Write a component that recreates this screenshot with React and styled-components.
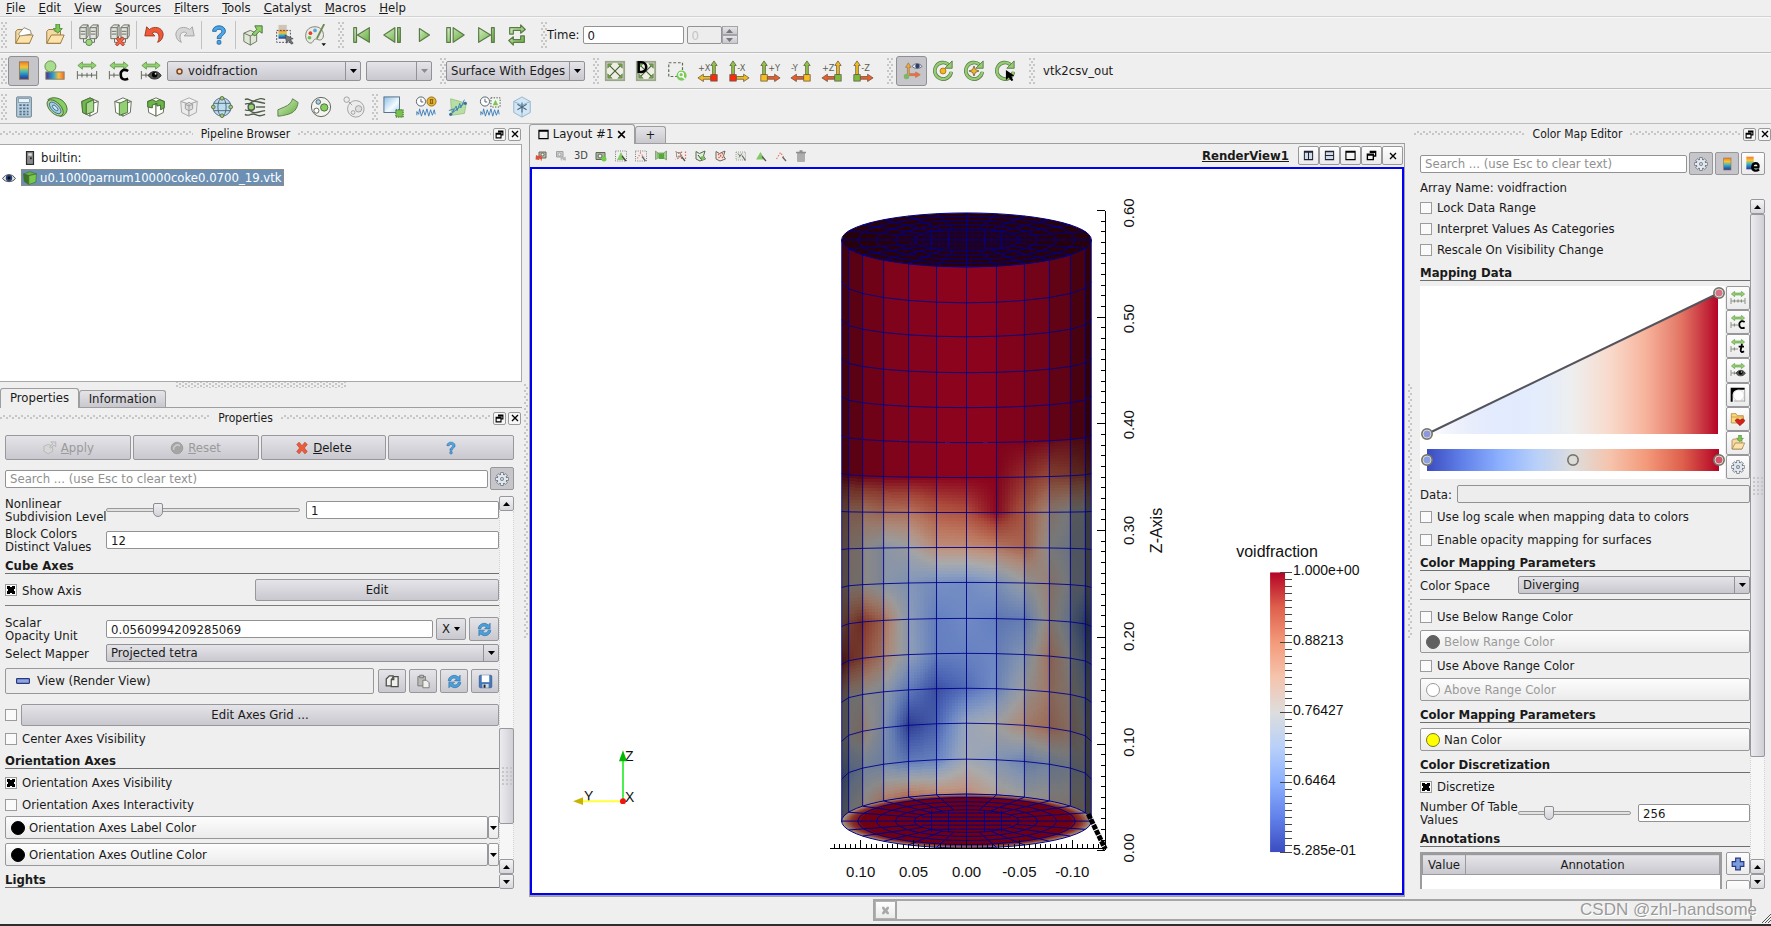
import React from 'react';
import styled, { createGlobalStyle } from 'styled-components';

const GlobalStyle = createGlobalStyle`
  * {
    box-sizing: border-box;
  }

  body {
    margin: 0;
    background: #efefef;
    color: #1a1a1a;
    font-family: 'DejaVu Sans Condensed', 'DejaVu Sans', sans-serif;
    font-size: 13px;
    line-height: 14px;
  }

  button, input, select {
    font: inherit;
    color: inherit;
    margin: 0;
  }
`;

const raised = 'linear-gradient(#e4e4e9, #c8c8ce)';
const pale = 'linear-gradient(#fdfdfd, #ebebeb)';
const dots = 'radial-gradient(circle at 1px 1px, #c6c6c6 1px, transparent 1px)';

const Page = styled.div`
  position: relative;
  display: flex;
  flex-direction: column;
  height: 100vh;
  min-height: 920px;
  overflow: hidden;
`;

const MenuBar = styled.nav`
  display: flex;
  align-items: flex-start;
  gap: 13px;
  height: 17px;
  padding: 0 6px;
  border-bottom: 1px solid #d2d2d2;
`;

const MenuItem = styled.button`
  height: 15px;
  border: 0;
  padding: 0;
  background: none;
  line-height: 15px;
`;

const ToolBar = styled.div`
  display: flex;
  align-items: center;
  height: ${props => props.$height || 36}px;
  padding-left: 1px;
  border-bottom: 1px solid #bdbdbd;
  border-top: 1px solid #f8f8f8;
`;

const Handle = styled.div`
  width: 6px;
  height: 26px;
  margin: 0 ${props => props.$right || 0}px 0 ${props => props.$left || 0}px;
  background: ${dots} 0 0 / 4px 6px, ${dots} 2px 3px / 4px 6px;
`;

const Separator = styled.div`
  width: 1px;
  height: 28px;
  margin: 0 1px;
  background: #c2c2c2;
`;

const ToolButton = styled.button`
  display: flex;
  align-items: center;
  justify-content: center;
  flex: none;
  width: ${props => props.$width || 31}px;
  height: 30px;
  padding: 0;
  border: 1px solid ${props => (props.$active ? '#8f8f93' : 'transparent')};
  border-radius: 3px;
  background: ${props => (props.$active ? '#c6c6ca' : 'none')};
`;

const TextBox = styled.input`
  flex: ${props => (props.$width ? 'none' : '1')};
  width: ${props => (props.$width ? props.$width + 'px' : 'auto')};
  min-width: 0;
  height: 18px;
  padding: 0 4px;
  border: 1px solid #929292;
  border-radius: 2px;
  background: ${props => (props.disabled ? '#ededed' : '#fff')};
  line-height: 14px;

  &::placeholder {
    color: #909090;
    opacity: 1;
  }
`;

const TimeLabel = styled.label`
  display: flex;
  align-items: center;
  gap: 3px;
`;

const Spinner = styled.div`
  display: flex;
  margin-left: 3px;
  color: #c4c4c4;
`;

const SpinnerArrows = styled.div`
  display: flex;
  flex-direction: column;
  width: 16px;
`;

const ArrowButton = styled.button`
  display: flex;
  align-items: center;
  justify-content: center;
  height: 9px;
  padding: 0;
  border: 1px solid #a4a4a8;
  background: ${raised};
`;

const SelectBox = styled.div`
  display: grid;
  align-items: center;
  flex: ${props => (props.$width ? 'none' : '1')};
  width: ${props => (props.$width ? props.$width + 'px' : 'auto')};
  height: ${props => props.$height || 18}px;
  margin-left: ${props => props.$left || 0}px;

  select {
    grid-area: 1 / 1;
    width: 100%;
    height: 100%;
    padding: 0 18px 0 ${props => props.$pad || 4}px;
    appearance: none;
    border: 1px solid #929296;
    border-radius: 2px;
    background: ${raised};
    opacity: 1;
  }
`;

const SelectArrow = styled.span`
  grid-area: 1 / 1;
  justify-self: end;
  display: flex;
  align-items: center;
  justify-content: center;
  width: 16px;
  height: 100%;
  border-left: 1px solid #929296;
  pointer-events: none;
`;

const SelectMark = styled.span`
  grid-area: 1 / 1;
  display: flex;
  width: 7px;
  margin-left: 9px;
  pointer-events: none;
`;

const MacroLink = styled.button`
  border: 0;
  padding: 0 0 0 8px;
  background: none;
`;

const Workspace = styled.main`
  display: flex;
  flex: 1;
  min-height: 0;
`;

const LeftDock = styled.section`
  display: flex;
  flex-direction: column;
  flex: none;
  width: 522px;
`;

const Splitter = styled.div`
  flex: none;
  display: flex;
  align-items: center;
  justify-content: center;
  width: ${props => props.$width}px;

  &::before {
    content: '';
    width: 4px;
    height: 254px;
    background: ${dots} 0 0 / 4px 6px, ${dots} 2px 3px / 4px 6px;
  }
`;

const SplitterRow = styled.div`
  flex: none;
  width: 170px;
  height: 6px;
  margin: 0 auto;
  background: ${dots} 0 3px / 6px 4px, ${dots} 3px 1px / 6px 4px;
`;

const TitleBar = styled.header`
  display: flex;
  align-items: center;
  gap: 2px;
  flex: none;
  height: 20px;
  padding-right: ${props => props.$right || 0}px;

  h2 {
    margin: 0 6px;
    font-size: 12px;
    font-weight: normal;
  }
`;

const Grip = styled.div`
  flex: 1;
  height: 6px;
  background: ${dots} 0 2px / 6px 6px, ${dots} 3px 0 / 6px 6px;
`;

const DockButton = styled.button`
  display: flex;
  align-items: center;
  justify-content: center;
  width: 13px;
  height: 13px;
  padding: 0;
  border: 1px solid #9a9a9a;
  border-radius: 2px;
  background: #f6f6f6;
`;

const Tree = styled.ul`
  flex: none;
  height: 238px;
  margin: 0;
  padding: 4px 0 0;
  border: 1px solid #a8a8a8;
  border-left: 0;
  background: #fff;
  list-style: none;
`;

const TreeItem = styled.li`
  display: flex;
  align-items: center;
  height: ${props => (props.$selected ? 17 : 18)}px;
  padding-left: ${props => (props.$selected ? 2 : 23)}px;
  gap: ${props => (props.$selected ? 5 : 4)}px;
  margin-bottom: 2px;
`;

const TreeLabel = styled.span`
  display: flex;
  align-items: center;
  gap: 3px;
  height: 17px;
  padding: 0 1px 0 1px;
  background: #6c90b4;
  border: 1px solid #8d8d86;
  color: #fff;
`;

const Tabs = styled.div`
  display: flex;
  align-items: flex-end;
  flex: none;
  height: 20px;
  border-bottom: 1px solid #9e9e9e;
`;

const Tab = styled.button`
  display: flex;
  align-items: center;
  justify-content: center;
  gap: 4px;
  width: ${props => props.$width}px;
  height: ${props => (props.$active ? 20 : 17)}px;
  margin-bottom: ${props => (props.$active ? -1 : 0)}px;
  padding: 0 0 1px;
  border: 1px solid #9e9e9e;
  border-bottom: 0;
  border-radius: 3px 3px 0 0;
  background: ${props => (props.$active ? '#efefef' : raised)};
`;

const ActionRow = styled.div`
  display: grid;
  grid-template-columns: repeat(4, 1fr);
  gap: 2px;
  padding: 7px 8px 0 5px;
`;

const PushButton = styled.button`
  display: flex;
  align-items: center;
  justify-content: center;
  gap: 4px;
  flex: ${props => (props.$width ? 'none' : '1')};
  width: ${props => (props.$width ? props.$width + 'px' : 'auto')};
  height: ${props => props.$height || 22}px;
  padding: 0;
  border: 1px solid #98989c;
  border-radius: 2px;
  background: ${props => (props.$active ? '#c6c6ca' : props.$pale ? pale : raised)};
  color: ${props => (props.disabled ? '#9a9a9a' : '#1a1a1a')};
`;

const SearchRow = styled.div`
  display: flex;
  align-items: center;
  gap: 2px;
  padding: ${props => props.$pad};
`;

const ScrollArea = styled.div`
  display: flex;
  flex: 1;
  min-height: 0;
  margin: ${props => props.$margin};
`;

const ScrollBody = styled.div`
  flex: 1;
  min-width: 0;
  overflow: hidden;
`;

const ScrollBar = styled.div`
  display: flex;
  flex-direction: column;
  flex: none;
  width: 15px;
  background: #f6f6f6;
`;

const ScrollStep = styled.button`
  display: flex;
  align-items: center;
  justify-content: center;
  height: 15px;
  padding: 0;
  border: 1px solid #98989c;
  border-radius: 2px;
  background: linear-gradient(#f4f4f6, #d8d8dc);
`;

const ScrollTrack = styled.div`
  display: flex;
  flex-direction: column;
  flex: 1;
  border: 1px dotted #d0d0d0;
  border-width: 0 1px;
  padding-top: ${props => props.$top}px;
`;

const ScrollThumb = styled.div`
  display: flex;
  align-items: center;
  justify-content: center;
  height: ${props => props.$height}px;
  margin: 0 -1px;
  border: 1px solid #98989c;
  border-radius: 2px;
  background: linear-gradient(90deg, #ececf0, #cfcfd5);

  &::before {
    content: '';
    width: 10px;
    height: 18px;
    background: ${dots} 0 0 / 4px 4px;
  }
`;

const Row = styled.div`
  display: flex;
  align-items: center;
  gap: ${props => props.$gap || 0}px;
  min-height: 14px;
  margin-top: ${props => props.$top}px;
`;

const RowLabel = styled.label`
  width: ${props => props.$width}px;
  flex: none;
  line-height: 13px;
  white-space: pre;
`;

const Heading = styled.h3`
  height: 17px;
  margin: ${props => props.$top}px 0 0;
  border-bottom: 1px solid #6f6f6f;
  font-size: 13px;
  line-height: 17px;
`;

const Rule = styled.hr`
  height: 1px;
  margin: ${props => props.$top}px 0 0;
  border: 0;
  background: #7c7c7c;
`;

const CheckLabel = styled.label`
  display: flex;
  align-items: center;
  gap: 5px;
`;

const CheckBox = styled.input`
  flex: none;
  width: 12px;
  height: 12px;
  appearance: none;
  border: 1px solid #9c9c9c;
  background: #fafafa;

  &:checked {
    background:
      linear-gradient(45deg, transparent 34%, #000 34%, #000 66%, transparent 66%) center / 8px 8px no-repeat,
      linear-gradient(-45deg, transparent 34%, #000 34%, #000 66%, transparent 66%) center / 8px 8px no-repeat,
      #fafafa;
  }
`;

const Slider = styled.input`
  flex: none;
  width: ${props => props.$width}px;
  height: 16px;
  margin-right: ${props => props.$right}px;
  appearance: none;
  background: none;

  &::-webkit-slider-runnable-track {
    height: 4px;
    border: 1px solid #9a9a9a;
    border-radius: 2px;
    background: #e2e2e2;
  }

  &::-webkit-slider-thumb {
    width: 10px;
    height: 14px;
    margin-top: -6px;
    appearance: none;
    border: 1px solid #8c8c90;
    border-radius: 2px 2px 5px 5px;
    background: linear-gradient(#f0f0f3, #d2d2d8);
  }
`;

const GroupButton = styled(PushButton)`
  justify-content: flex-start;
  gap: 7px;
  padding-left: 10px;
  margin-right: 1px;
  background: #ededed;
`;

const ColorButton = styled(PushButton)`
  justify-content: flex-start;
  padding-left: 5px;
  background: ${pale};
`;

const Swatch = styled.i`
  width: 14px;
  height: 14px;
  border: 1px solid ${props => props.$edge || '#333'};
  border-radius: 50%;
  background: ${props => props.$color};
`;

const Center = styled.section`
  display: flex;
  flex-direction: column;
  flex: 1;
  min-width: 0;
`;

const ViewFrame = styled.div`
  display: flex;
  flex-direction: column;
  flex: 1;
  min-height: 0;
  border: 1px solid #a0a0a0;
  border-top: 0;
  border-bottom-width: 2px;
`;

const ViewBar = styled.div`
  display: flex;
  align-items: center;
  flex: none;
  height: 23px;
  padding: 0 1px;
`;

const ViewTool = styled.button`
  display: flex;
  align-items: center;
  justify-content: center;
  width: 20px;
  height: 20px;
  padding: 0;
  border: 0;
  background: none;
  color: #444;
  font-size: 11px;
`;

const ViewName = styled.strong`
  margin: 0 9px 0 auto;
  font-size: 13px;
  text-decoration: underline;
`;

const ViewButton = styled.button`
  display: flex;
  align-items: center;
  justify-content: center;
  width: 21px;
  height: 19px;
  padding: 0;
  border: 1px solid #98989c;
  border-radius: 2px;
  background: ${pale};
`;

const Canvas = styled.div`
  flex: 1;
  min-height: 0;
  border: 2px solid #0000f4;
  background: #fff;

  svg {
    display: block;
    width: 100%;
    height: 100%;
  }
`;

const RightDock = styled.section`
  display: flex;
  flex-direction: column;
  flex: none;
  width: 357px;
`;

const ArrayName = styled.p`
  margin: 6px 0 4px 6px;
`;

const MappingRow = styled.div`
  display: flex;
  gap: 1px;
  margin-top: 5px;
`;

const MappingChart = styled.div`
  flex: 1;
  height: 193px;
  background: #fff;

  svg {
    display: block;
    width: 100%;
    height: 100%;
  }
`;

const MappingTools = styled.div`
  display: flex;
  flex-direction: column;
  width: 24px;
`;

const AnnotationRow = styled.div`
  display: flex;
  gap: 4px;
  height: 60px;
  margin-top: 5px;
`;

const AnnotationBox = styled.div`
  flex: 1;
  border: 2px solid #9c9c9c;
  background: #fff;
`;

const AnnotationTable = styled.table`
  width: 100%;
  border-collapse: collapse;

  th {
    height: 20px;
    padding: 0;
    border: 1px solid #9a9a9e;
    background: ${raised};
    font-weight: normal;
  }

  th:first-child {
    width: 43px;
  }
`;

const AnnotationTools = styled.div`
  display: flex;
  flex-direction: column;
  gap: 5px;
  width: 24px;

  button {
    flex: none;
  }
`;

const StatusBar = styled.footer`
  display: flex;
  justify-content: flex-end;
  flex: none;
  height: 29px;
  padding: 2px 19px 3px 0;
  border-bottom: 2px solid #2e2e2e;
`;

const Progress = styled.div`
  display: flex;
  width: calc(50% + 3px);
  height: 22px;
  border: 2px solid #a6a6a6;
`;

const StopButton = styled.button`
  display: flex;
  align-items: center;
  justify-content: center;
  width: 22px;
  padding: 0;
  border: 1px solid #b4b4b4;
  border-right: 2px solid #a6a6a6;
  background: ${pale};
`;

const Watermark = styled.div`
  position: absolute;
  right: 14px;
  bottom: 6px;
  font-family: 'Liberation Sans', sans-serif;
  font-size: 17px;
  line-height: 20px;
  color: #9a9a9a;
  text-shadow: 1px 1px 0 #fff;
`;

const SizeGrip = styled.svg`
  position: absolute;
  right: 0;
  bottom: 3px;
`;

// ---------- icons ----------

const Cube = ({ front = '#fff', side = '#fff', top = '#fff', edge = '#5c6b50' }) => (
  <g stroke={edge} strokeLinejoin="round">
    <path d="M3 6 12 2 21 6 12 9Z" fill={top} />
    <path d="M3 6 12 9V22L4 18Z" fill={front} />
    <path d="M21 6 12 9V22L20 18Z" fill={side} />
  </g>
);

const Arrows = () => (
  <path d="M2 6 7 2V4.500H17V2L22 6 17 10V7.500H7V10Z" fill="#8fd46a" stroke="#5a8a48" strokeWidth=".8" />
);

const Scale = () => (
  <path d="M1.500 12V21M22.500 12V21M2 16.500H22M6.500 14V19M12 14V19M17 14V19" stroke="#5a6050" fill="none" />
);

const ShortScale = () => (
  <path d="M1.500 12V21M2 16.500H12M6.500 14V19" stroke="#5a6050" fill="none" />
);

const Servers = () => (
  <g fill="#e2e4de" stroke="#63675b">
    <path d="M2 4 5 1H11V13L9 16H2Z" />
    <path d="M13 4 16 1H22V13L20 16H13Z" />
    <path d="M2 4H9V16M9 4 11 1M13 4H20V16M20 4 22 1M3 8H8M3 11H8M14 8H19M14 11H19" fill="none" />
    <path d="M6 16V20H18V16" fill="none" />
  </g>
);

const Clock = () => (
  <g>
    <circle cx="6.500" cy="6" r="5" fill="#fff" stroke="#4d5a66" />
    <path d="M6.500 3V6.500H9" fill="none" stroke="#4d5a66" />
    <path d="M2 21V17L4 20 5 14 7 22 9 15 11 21 13 14 15 22 17 15 19 21 21 15 22 20" fill="none" stroke="#3b7db8" />
  </g>
);

const Expand = () => (
  <g>
    <rect x="2" y="2" width="20" height="20" fill="#edefe4" stroke="#9aa58a" strokeWidth="2" />
    <path d="M5 5 19 19M19 5 5 19" stroke="#4c6338" strokeWidth="1.300" />
    <path d="M4 4H9L4 9ZM20 4V9L15 4ZM4 20V15L9 20ZM20 20H15L20 15Z" fill="#6aa343" stroke="#4c6338" strokeWidth=".5" />
  </g>
);

const axisColors = { g: '#8cc63f', y: '#f4b91e', r: '#f05a28' };

// flip: box on the left, arrow to the right
const AxisView = ({ label, up, side, box, flip }) => (
  <g stroke="#5d5440" strokeWidth=".8">
    <path d={flip ? 'M4 16V6H2L5.500 1 9 6H7V16Z' : 'M17 16V6H15L18.500 1 22 6H20V16Z'} fill={axisColors[up]} />
    <path d={flip ? 'M9 18H17V15.500L23 19.500 17 23.500V21H9Z' : 'M15 18H7V15.500L1 19.500 7 23.500V21H15Z'} fill={axisColors[side]} />
    <rect x={flip ? 2 : 15} y="16" width="7" height="7" fill={box} />
    <text x={flip ? 10 : 1} y="12" fontSize="10" fill="#5d5d50" stroke="none">{label}</text>
  </g>
);

const Rotate = () => (
  <g>
    <path d="M18 5A9 9 0 1 0 21 13" fill="none" stroke="#5c7a45" strokeWidth="4" />
    <path d="M18 5A9 9 0 1 0 21 12.500" fill="none" stroke="#94cc74" strokeWidth="2.400" />
    <path d="M22 1V9H14Z" fill="#94cc74" stroke="#5c7a45" />
  </g>
);

const Folder = () => (
  <g stroke="#96723c" strokeLinejoin="round">
    <path d="M3 21V8L5 6H10L12 8H18V21Z" fill="#f3d9a2" />
    <path d="M3 21 8 12H22L18 21Z" fill="#fbe3ab" />
  </g>
);

const RainbowDef = () => (
  <defs>
    <linearGradient id="rainbow" x1="0" y1="0" x2="0" y2="1">
      <stop offset="0" stopColor="#f37a2c" />
      <stop offset=".3" stopColor="#f6c433" />
      <stop offset=".55" stopColor="#4fb8b0" />
      <stop offset=".8" stopColor="#1d6fc0" />
      <stop offset="1" stopColor="#3b2c8c" />
    </linearGradient>
    <linearGradient id="rainbowFlat">
      <stop offset="0" stopColor="#43308e" />
      <stop offset=".4" stopColor="#2f9fd0" />
      <stop offset=".7" stopColor="#f5c23a" />
      <stop offset="1" stopColor="#ee6a2a" />
    </linearGradient>
    <linearGradient id="leaf" x1="0" y1="0" x2="1" y2="1">
      <stop offset="0" stopColor="#d5f0c4" />
      <stop offset="1" stopColor="#62ab3c" />
    </linearGradient>
    <linearGradient id="sky" x1="0" y1="0" x2="1" y2="1">
      <stop offset="0" stopColor="#8cc0e6" />
      <stop offset=".6" stopColor="#f4faff" />
      <stop offset="1" stopColor="#a8d0ee" />
    </linearGradient>
  </defs>
);

const playStyle = { fill: 'url(#leaf)', stroke: '#5b7a48', strokeLinejoin: 'round', strokeWidth: 1.3 };

const icons = {
  open: <><Folder /><path d="M6 11 12 4 19 7 20 11 8 13Z" fill="#fff" stroke="#8d8674" /></>,
  save: <><Folder /><path d="M13 0H17V5H20L15 10 10 5H13Z" fill="#7cc955" stroke="#4d8a36" /></>,
  connect: <><Servers /><circle cx="12" cy="20" r="3.500" fill="#9ada7c" stroke="#5c7a45" /></>,
  disconnect: <><Servers /><path d="M8 16 10 14 12 17 14 14 17 16 14 19 17 22 15 24 12 21 9 24 7 22 10 19Z" fill="#ef6548" stroke="#a93a24" /></>,
  undo: <path d="M2 13 4 3 7 6C12 2 21 3 22 11 22 16 19 19 16 20 18 16 18 12 16 10 14 8 11 9 10 10L13 13Z" fill="#ee5a38" stroke="#9d3620" />,
  redo: <path d="M22 13 20 3 17 6C12 2 3 3 2 11 2 16 5 19 8 20 6 16 6 12 8 10 10 8 13 9 14 10L11 13Z" fill="#d6d6d6" stroke="#a2a2a2" />,
  help: <><path d="M5 8C5 0 19 0 19 8 19 12 14 12 14 16H10C10 11 15 11 15 8 15 5 9 5 9 8Z" fill="#4ba6e8" stroke="#27679f" /><rect x="10" y="18" width="4" height="4" rx="1" fill="#4ba6e8" stroke="#27679f" /></>,
  boxOut: <><path d="M2 10 9 7 16 10V19L9 23 2 19Z" fill="#dfe8d8" stroke="#667058" /><path d="M2 10 9 13 16 10M9 13V23" fill="none" stroke="#667058" /><path d="M11 11 16 6 14 2H22V10L19 8 14 13Z" fill="#8fcf6c" stroke="#47702f" /></>,
  pickColor: <><rect x="6" y="1" width="9" height="6" fill="#cfc4b8" /><rect x="6" y="7" width="9" height="9" fill="url(#rainbow)" /><rect x="4" y="7" width="15" height="13" fill="none" stroke="#444" strokeDasharray="2 1.500" /><path d="M13 12 22 16 19 17 22 21 20 22 17 18 15 21Z" fill="#71777c" stroke="#444" strokeWidth=".7" /></>,
  palette: <><path d="M12 3C4 3 1 9 2 15 3 20 7 22 9 20 11 18 11 15 15 17 20 19 22 14 21 10 20 6 17 3 12 3Z" fill="#e9ebe6" stroke="#75796e" /><circle cx="7" cy="10" r="2" fill="#e5402c" /><circle cx="12" cy="7" r="2" fill="#5aa7dd" /><circle cx="6" cy="15" r="2" fill="#69c04a" /><path d="M22 0 14 16" stroke="#6c8a50" strokeWidth="2" /><path d="M19 21H24L21.500 24Z" fill="#111" /></>,
  first: <g {...playStyle}><path d="M3 4H6V20H3ZM20 4V20L7 12Z" /></g>,
  back: <g {...playStyle}><path d="M14 4V20L2 12ZM17 4H20V20H17Z" /></g>,
  play: <g {...playStyle}><path d="M7 5 18 12 7 19Z" /></g>,
  forward: <g {...playStyle}><path d="M3 4H7V20H3ZM10 4 22 12 10 20Z" /></g>,
  last: <g {...playStyle}><path d="M4 4 17 12 4 20ZM18 4H21V20H18Z" /></g>,
  loop: <g {...playStyle}><path d="M4 11V4H16V1L21 6 16 10V7H8V11ZM20 13V20H8V23L3 18 8 14V17H16V13Z" /></g>,
  colorBar: <rect x="7" y="2" width="10" height="19" fill="url(#rainbow)" stroke="#8f7b52" />,
  editMap: <><rect x="2" y="13" width="20" height="8" fill="url(#rainbowFlat)" stroke="#8b8370" /><circle cx="7" cy="7" r="6" fill="#a6de8c" stroke="#5f8a4a" /></>,
  rescale: <><Arrows /><Scale /></>,
  rescaleC: <><Arrows /><ShortScale /><path d="M22 12C17 9 13 12 14 17 14 21 18 22 22 20.500" fill="none" stroke="#000" strokeWidth="2.800" /></>,
  rescaleT: <><Arrows /><ShortScale /><path d="M18 9 16 18C16 21 18 22 21 20M13 13H21" fill="none" stroke="#000" strokeWidth="2.800" /></>,
  rescaleEye: <><Arrows /><ShortScale /><path d="M9 17C12 11 20 11 23 17 20 22 12 22 9 17Z" fill="#555" stroke="#222" /><circle cx="16" cy="16" r="3" fill="#000" /><circle cx="17" cy="15" r="1" fill="#ddd" /></>,
  reset: <Expand />,
  resetD: <><Expand /><path d="M4 2.500H7C14 2.500 14 13 7 13H4Z" fill="none" stroke="#000" strokeWidth="2.800" /></>,
  zoomBox: <><rect x="3" y="3" width="15" height="15" fill="none" stroke="#5f6f50" strokeWidth="1.300" strokeDasharray="3 2" /><circle cx="17" cy="17" r="5.500" fill="#7acb58" /><circle cx="16.500" cy="16" r="2.500" fill="none" stroke="#fff" strokeWidth="1.300" /><path d="M18 18 21 21" stroke="#fff" strokeWidth="1.500" /></>,
  plusX: <AxisView label="+X" up="g" side="y" box="#fb2a0c" />,
  minusX: <AxisView label="-X" up="g" side="y" box="#fb2a0c" flip />,
  plusY: <AxisView label="+Y" up="g" side="r" box="#fbbd1d" flip />,
  minusY: <AxisView label="-Y" up="g" side="r" box="#fbbd1d" />,
  plusZ: <AxisView label="+Z" up="y" side="r" box="#7cba3c" />,
  minusZ: <AxisView label="-Z" up="y" side="r" box="#7cba3c" flip />,
  showAxes: <><path d="M7 17V8H5L8 3 11 8H9V15H16V13L21 16 16 19V17Z" fill="#f0a53a" stroke="#8f7450" strokeWidth=".7" /><path d="M9 15H16V13L21 16 16 19V17H9Z" fill="#ef6a48" /><circle cx="6" cy="18" r="3" fill="#7bb768" /><path d="M12 7C15 3 20 3 23 7 20 10 15 10 12 7Z" fill="#e8eaf2" stroke="#5c6378" /><circle cx="18" cy="6.500" r="2.500" fill="#2e3c66" /></>,
  center: <><Rotate /><circle cx="12" cy="12" r="3.200" fill="#f7b624" stroke="#a87812" /></>,
  resetCenter: <><Rotate /><path d="M12 6.500 13.500 10.500 17.500 12 13.500 13.500 12 17.500 10.500 13.500 6.500 12 10.500 10.500Z" fill="#f7b624" stroke="#7f6a3a" /></>,
  pickCenter: <><Rotate /><path d="M13 11 22 17 19 18 21 22 19 23 16 19 13 22Z" fill="#000" /></>,
  calculator: <><rect x="4" y="1" width="16" height="22" rx="1" fill="#b7cfdf" stroke="#5e7484" /><rect x="6" y="3" width="12" height="4" fill="#e8f3fa" stroke="#5e7484" strokeWidth=".6" /><path d="M7 10H17M7 13.500H17M7 17H17M7 20H17" stroke="#547088" strokeWidth="2" strokeDasharray="2.500 1.500" /></>,
  contour: <g stroke="#4a6a38"><path d="M2 4C8-1 22 3 23 14 23 19 19 23 15 22Z" fill="#86cf62" /><ellipse cx="10" cy="13" rx="11" ry="6" transform="rotate(45 10 13)" fill="#a9d592" /><ellipse cx="10" cy="13" rx="8" ry="4" transform="rotate(45 10 13)" fill="#a6cde6" stroke="#436f90" /><ellipse cx="10" cy="13" rx="4" ry="1.800" transform="rotate(45 10 13)" fill="#cfe5f3" stroke="#436f90" /></g>,
  clip: <><Cube /><path d="M3 6 12 2 16 4 8 8V20L4 18Z" fill="#6fb84c" stroke="#4c6b3b" /><path d="M8 8 16 4V17L8 20Z" fill="#a5d88a" stroke="#4c6b3b" /></>,
  slice: <><Cube /><path d="M8 8 17 4V18L8 21Z" fill="#93d074" stroke="#4c6b3b" /></>,
  threshold: <><Cube /><path d="M3 6 8 4 12 6 16 4 21 6V13L17 15V10L13 11V8L8 10V13L3 12Z" fill="#6ab648" stroke="#42642f" /></>,
  subset: <><Cube front="#ececec" side="#ececec" top="#f4f4f4" edge="#a5a5a5" /><path d="M8 9 12 7 16 9V14L12 16 8 14ZM8 9 12 11 16 9M12 11V16" fill="#ddd" stroke="#999" /></>,
  glyph: <g fill="none" stroke="#4a6470"><circle cx="12" cy="12" r="10" fill="#bcdcf0" /><ellipse cx="12" cy="12" rx="4.500" ry="10" /><path d="M3 8H21M3 16H21" /><g fill="#a7c489" stroke="#587040"><circle cx="12" cy="2.500" r="2" /><circle cx="12" cy="21.500" r="2" /><circle cx="2.500" cy="12" r="2" /><circle cx="21.500" cy="12" r="2" /></g></g>,
  stream: <g fill="none" stroke="#4e5c48" strokeWidth="1.500"><path d="M1 4C5 1 7 7 12 5S18 2 23 4M1 9C4 7 5 10 8 7 12 4 15 7 23 8M1 15C4 17 5 14 8 17 12 20 15 17 23 16M1 20C5 23 8 18 12 20S18 22 23 20" /><circle cx="8" cy="12" r="3.500" fill="#94d272" /><path d="M13 12H23" /></g>,
  warp: <path d="M1 15 8 12C13 10 16 7 17 3L23 7C22 14 19 18 12 20 8 21 4 22 1 22Z" fill="url(#leaf)" stroke="#5c7a45" />,
  group: <><circle cx="12" cy="12" r="10.500" fill="#f3f4f1" stroke="#575d50" /><circle cx="9" cy="6.500" r="2.500" fill="#a9cfe8" stroke="#4d5d68" /><circle cx="15.500" cy="12.500" r="4" fill="#86cd62" stroke="#4b6b38" /><circle cx="7" cy="16" r="2.800" fill="#fff" stroke="#575d50" /></>,
  extract: <g fill="#ececec" stroke="#9d9d9d"><circle cx="14" cy="14" r="9" /><circle cx="4" cy="4" r="3" /><circle cx="17" cy="14" r="3.500" fill="#dedede" /><circle cx="11" cy="18" r="2" /><path d="M6 6 10 10" /></g>,
  selection: <><rect x="1" y="1" width="17" height="17" fill="url(#sky)" stroke="#4e6a80" /><rect x="14" y="15" width="8" height="8" fill="#79c14f" stroke="#2e5d22" strokeDasharray="1.500 1" /></>,
  plotTime: <><Clock /><circle cx="18" cy="6" r="5" fill="#e7b431" stroke="#8d6a19" /><path d="M16 4H20M16 8H20M17 4V8M19 4V8" stroke="#7a5a12" /></>,
  plotLine: <><path d="M4 3 21 8 19 19 5 21Z" fill="#b8dfa3" stroke="#9bc385" /><path d="M4 20 20 7" stroke="#3b7db8" /><path d="M2 16 7 14 6 18 10 11 11 16 14 8 15 13 19 4" fill="none" stroke="#3b7db8" /><circle cx="4" cy="20" r="1.700" fill="#3b6f9a" /><circle cx="20" cy="8" r="1.700" fill="#3b6f9a" /></>,
  plotSelection: <><Clock /><rect x="13" y="2" width="10" height="10" fill="#f2f8ee" stroke="#444" strokeDasharray="1.500 1.500" /><path d="M15 10 18 4 21 10Z" fill="#7bc554" /></>,
  probe: <g fill="#d3e6f4" stroke="#8fb2cc"><path d="M3 6 12 1 21 6V18L12 23 3 18Z" /><path d="M3 6 12 10 21 6M12 10V23" fill="none" /><path d="M12 7V18M7 9 17 15M17 9 7 15" stroke="#4b6b85" strokeWidth="1.200" /></g>,
  gear: <g><path d="M12 2V22M2 12H22M5 5 19 19M19 5 5 19" stroke="#6a7480" strokeWidth="5" /><circle cx="12" cy="12" r="7.500" fill="#6a7480" /><path d="M12 3V21M3 12H21M5.500 5.500 18.500 18.500M18.500 5.500 5.500 18.500" stroke="#e3e8ee" strokeWidth="3" /><circle cx="12" cy="12" r="6.500" fill="#e3e8ee" /><circle cx="12" cy="12" r="2.500" fill="#c3c9d0" stroke="#6a7480" /></g>,
  bars: <rect x="7" y="3" width="11" height="18" fill="url(#rainbow)" stroke="#8f7b52" />,
  barsE: <><rect x="2" y="1" width="11" height="19" fill="url(#rainbow)" /><path d="M11 17H20C22 9 12 9 11 16 10 23 18 23 21 20" fill="none" stroke="#000" strokeWidth="3.500" /></>,
  invert: <><path d="M1 1H22V4H12C6 5 4 8 4 13V22H1Z" fill="#000" /><path d="M22 21H6M22 4V22" stroke="#888" /><circle cx="13" cy="12.500" r="8" fill="#fff" stroke="#bbb" strokeWidth=".7" /></>,
  favorite: <><path d="M2 4H9L11 7H20V18H2Z" fill="#f9d77c" stroke="#a9741f" /><path d="M2 9H20" stroke="#c28a2c" /><path d="M15 22 8 15C8 11 13 11 15 14 17 11 22 11 22 15Z" fill="#d9211c" stroke="#8b120e" /></>,
  apply: <g fill="#d6d6d6" stroke="#a8a8a8"><path d="M3 10 10 7 17 10V18L10 22 3 18Z" /><path d="M12 12 17 6 14 3H22V11L19 8 14 13Z" /></g>,
  resetDisk: <><circle cx="12" cy="12" r="10" fill="#a5a5a5" stroke="#8a8a8a" /><path d="M6 15C6 8 12 5 17 8" fill="none" stroke="#c9c9c9" strokeWidth="3" /></>,
  remove: <path d="M3 6 7 2 12 8 17 2 21 6 16 12 21 18 17 22 12 16 7 22 3 18 8 12Z" fill="#ee5a3a" stroke="#ab3a20" />,
  refresh: <g fill="#4aa0dc" stroke="#2c6ea3"><path d="M2 11C2 3 13-1 18 5L21 2V11H12L15 8C11 5 7 7 6 11Z" /><path d="M22 13C22 21 11 25 6 19L3 22V13H12L9 16C13 19 17 17 18 13Z" /></g>,
  copy: <g fill="#f0f0ee" stroke="#4c4c48" strokeWidth="2"><path d="M2 8 7 3H13V19H2Z" /><path d="M10 9 14 4H21V20H10Z" /><path d="M14 5V9H10" fill="none" /></g>,
  paste: <g fill="#b9b9b6" stroke="#777" strokeWidth="1.500"><path d="M3 4H15V19H3Z" /><path d="M6 2H12V6H6Z" /><path d="M11 10H17L21 14V22H11Z" fill="#efefed" /></g>,
  disk: <g stroke="#234c86"><rect x="2" y="2" width="20" height="20" rx="2" fill="#4478b8" /><rect x="6" y="2" width="12" height="11" fill="#fff" stroke="none" /><rect x="7" y="16" width="10" height="6" fill="#cfd6de" stroke="none" /><rect x="9" y="17" width="3" height="5" fill="#222" stroke="none" /></g>,
  minus: <rect x="1" y="8" width="22" height="8" rx="1" fill="#8ea6e0" stroke="#28377f" strokeWidth="2" />,
  plus: <path d="M8 2H16V8H22V16H16V22H8V16H2V8H8Z" fill="#7c9ce0" stroke="#26397f" strokeWidth="2" />,
  stop: <path d="M3 2 8 2 12 7 16 2 21 2V7L17 12 21 17V22H16L12 17 8 22H3V17L7 12 3 7Z" fill="#a8a8a8" />,
  eye: <><path d="M1 13C6 4 18 4 23 13 18 20 6 20 1 13Z" fill="#dfe3ea" stroke="#3a3a3a" strokeWidth="1.500" /><circle cx="12" cy="12" r="5.500" fill="#26437a" /><circle cx="12" cy="12" r="2.500" fill="#050a18" /></>,
  server: <><rect x="6" y="1" width="12" height="22" fill="#8b8b8b" stroke="#2c2c2c" strokeWidth="2" /><rect x="9" y="4" width="6" height="4" fill="#e3e3e3" /><rect x="12" y="11" width="3" height="3" fill="#222" /></>,
  dataset: <g stroke="#3a6b25"><path d="M1 5 12 1 23 5 10 8Z" fill="#6fae4d" /><path d="M1 5 10 8V23L2 18Z" fill="#3f7427" /><path d="M23 5 10 8V23L22 19Z" fill="#79c84e" /></g>,
  float: <path d="M8 3H21V13H17M3 9H16V21H3ZM3 11H16M8 5H21V9" fill="none" stroke="#000" strokeWidth="3" />,
  close: <path d="M3 3 21 21M21 3 3 21" fill="none" stroke="#000" strokeWidth="4" />,
  window: <path d="M2 3H22V21H2ZM2 5H22" fill="none" stroke="#000" strokeWidth="2.500" />,
  splitH: <path d="M3 3H21V21H3ZM12 3V21M3 5H21" fill="#cfdcea" stroke="#223" strokeWidth="2.200" />,
  splitV: <path d="M3 3H21V21H3ZM3 12H21M3 4H21" fill="#cfdcea" stroke="#223" strokeWidth="2.200" />,
  camUndo: <><path d="M8 4H22V16H8Z" fill="#b9b6a6" stroke="#6d6a5c" strokeWidth="2" /><circle cx="15" cy="9" r="3" fill="#eee" stroke="#6d6a5c" strokeWidth="2" /><path d="M1 19 2 10 6 12C13 9 17 15 12 23 12 18 10 16 8 17L9 20Z" fill="#d9523a" /></>,
  camRedo: <><path d="M3 3H16V14H3Z" fill="#ccc" stroke="#a2a2a2" strokeWidth="2" /><circle cx="9" cy="9" r="3" fill="#eee" stroke="#a2a2a2" strokeWidth="2" /><path d="M22 21 21 13 18 15C12 11 9 16 13 23 13 18 14 17 16 18L15 20Z" fill="#b5b5b5" /></>,
  camera: <><path d="M2 5H20V19H2Z" fill="#a9b59b" stroke="#5f6a54" strokeWidth="2" /><circle cx="10" cy="12" r="4" fill="#eef" stroke="#5f6a54" strokeWidth="2" /><circle cx="18" cy="18" r="5" fill="#6cd043" /></>,
  selCells: <><path d="M1 2H23V22H1Z" fill="none" stroke="#555" strokeWidth="1.500" strokeDasharray="2 2.500" /><path d="M4 20 12 4 20 20Z" fill="#86c868" /><path d="M14 12 22 22" stroke="#444" strokeWidth="2.500" /></>,
  selPoints: <><path d="M1 2H23V22H1Z" fill="none" stroke="#555" strokeWidth="1.500" strokeDasharray="2 2.500" /><path d="M5 17 11 6 18 15" fill="none" stroke="#e8806c" strokeWidth="2.500" strokeDasharray="2.500 3" /><path d="M14 13 21 22" stroke="#666" strokeWidth="2.500" /></>,
  frustumCells: <><path d="M1 2 6 6H17L23 2V20L17 16H6L1 19Z" fill="#9ccf88" stroke="#7a8d70" strokeWidth="1.500" /><path d="M6 6V15M17 6V15" stroke="#55744a" /><rect x="8" y="7" width="10" height="11" fill="#57a83b" /></>,
  frustumPoints: <><path d="M1 3 8 7V16L1 19M13 3V20M21 3V20" fill="none" stroke="#d9705c" strokeWidth="2.500" strokeDasharray="3 3" /><path d="M3 5H11V14H3Z" fill="none" stroke="#79806f" strokeWidth="1.500" /><path d="M13 13 20 22" stroke="#555" strokeWidth="2.500" /></>,
  polyCells: <><path d="M2 3 9 7 20 2 17 12 21 18 10 22 2 18Z" fill="#dfeeda" stroke="#5a6a50" strokeWidth="2" /><circle cx="15" cy="16" r="4" fill="#7ec25f" /><path d="M6 10 13 19" stroke="#444" strokeWidth="2" /></>,
  polyPoints: <><path d="M2 3 9 7 20 2 17 12 21 18 10 22 2 18Z" fill="#f6e6e2" stroke="#6a6a5c" strokeWidth="2" /><path d="M6 8 18 17M7 16 16 6" stroke="#dd5a44" strokeWidth="2.500" strokeDasharray="3 2" /></>,
  selBlock: <><path d="M2 4H21V20H2Z" fill="#e5e9e2" stroke="#888" strokeWidth="1.500" strokeDasharray="2 2" /><path d="M6 7 10 12M14 7 8 15" stroke="#6d7a64" strokeWidth="2" /><path d="M14 11 21 21" stroke="#666" strokeWidth="2.500" /></>,
  pickCells: <><path d="M2 19 11 4 20 19Z" fill="#86c868" /><path d="M14 13 22 22" stroke="#555" strokeWidth="2.500" /></>,
  pickPoints: <><path d="M3 18 11 5 19 17" fill="none" stroke="#e8806c" strokeWidth="2.500" strokeDasharray="3 3" /><path d="M15 14 22 22" stroke="#666" strokeWidth="2.500" /></>,
  trash: <><path d="M5 6H19V23H5Z" fill="#adadad" stroke="#8e8e8e" /><path d="M2 5H22M9 2H15" stroke="#8e8e8e" strokeWidth="3" /></>,
};

const Icon = ({ name, size = 24 }) => (
  <svg width={size} height={size} viewBox="0 0 24 24" fill="none" aria-hidden="true">
    {icons[name]}
  </svg>
);

const Triangle = ({ up, color = '#000', size = 7 }) => (
  <svg width={size} height="4" viewBox="0 0 8 4" preserveAspectRatio="none" aria-hidden="true">
    <path d={up ? 'M0 4 4 0 8 4Z' : 'M0 0H8L4 4Z'} fill={color} />
  </svg>
);

// ---------- small shared parts ----------

const Mnemonic = ({ text }) => <span><u>{text[0]}</u>{text.slice(1)}</span>;

function Select({ label, value, mark, disabled, ...box }) {
  return (
    <SelectBox {...box}>
      <select aria-label={label} defaultValue={value} disabled={disabled}>
        <option>{value}</option>
      </select>
      {mark && (
        <SelectMark>
          <svg width="7" height="7" viewBox="0 0 7 7">
            <circle cx="3.500" cy="3.500" r="2.500" fill="#f8d8b8" stroke="#7c4a22" strokeWidth="1.500" />
          </svg>
        </SelectMark>
      )}
      <SelectArrow><Triangle color={disabled ? '#8c8c8c' : '#000'} /></SelectArrow>
    </SelectBox>
  );
}

function Check({ label, ...rest }) {
  return (
    <CheckLabel>
      <CheckBox type="checkbox" {...rest} />
      {label}
    </CheckLabel>
  );
}

function DockTitle({ title, right }) {
  return (
    <TitleBar $right={right}>
      <Grip />
      <h2>{title}</h2>
      <Grip />
      <DockButton aria-label="Float"><Icon name="float" size={9} /></DockButton>
      <DockButton aria-label="Close"><Icon name="close" size={8} /></DockButton>
    </TitleBar>
  );
}

function VerticalScroll({ top, height }) {
  return (
    <ScrollBar>
      <ScrollStep aria-label="Up"><Triangle up /></ScrollStep>
      <ScrollTrack $top={top}><ScrollThumb $height={height} /></ScrollTrack>
      <ScrollStep aria-label="Page up"><Triangle up /></ScrollStep>
      <ScrollStep aria-label="Down"><Triangle /></ScrollStep>
    </ScrollBar>
  );
}

const tools = (names, width) => names.map(name => (
  <ToolButton key={name} aria-label={name} $width={width}><Icon name={name} size={22} /></ToolButton>
));

// ---------- render view ----------

const coolWarm = [
  [59, 76, 192], [98, 130, 234], [141, 176, 254], [184, 208, 249], [221, 221, 221],
  [245, 196, 173], [244, 154, 123], [222, 96, 77], [180, 4, 38],
];

function mapColor(value, shade = 1) {
  const pos = Math.min(Math.max(value, 0), 1) * 8;
  const i = Math.min(Math.floor(pos), 7);
  const rgb = coolWarm[i].map((c, k) => Math.round((c + (coolWarm[i + 1][k] - c) * (pos - i)) * shade));
  return `rgb(${rgb.join(',')})`;
}

const CX = 967;
const RX = 125;
const columns = [842, 849, 863, 884, 909, 937, 967, 997, 1025, 1050, 1071, 1086, 1092];
const shades = [0.36, 0.5, 0.62, 0.7, 0.74, 0.77, 0.77, 0.71, 0.64, 0.54, 0.4, 0.27];

// [edge y, middle y] of each ring of the mesh
const rings = [
  [240, 267], [282, 303], [320, 337], [359, 373], [397, 408], [436, 443], [474, 478], [512, 513],
  [550, 548], [588, 583], [627, 619], [665, 654], [703, 689], [742, 724], [780, 760], [823, 795],
];

// voidfraction at the mesh nodes, from ring 5 down
const field = [
  [1, 1, 1, 1, 1, 1, 1, 1, 1, 0.98, 0.97, 0.98, 1],
  [1, 1, 1, 1, 1, 1, 1, 1, 0.92, 0.84, 0.86, 0.88, 0.88],
  [0.7, 0.68, 0.68, 0.74, 0.74, 0.83, 0.86, 0.99, 0.82, 0.58, 0.48, 0.45, 0.5],
  [0.62, 0.58, 0.52, 0.42, 0.48, 0.66, 0.67, 0.72, 0.78, 0.5, 0.42, 0.42, 0.5],
  [0.6, 0.55, 0.52, 0.42, 0.36, 0.29, 0.27, 0.33, 0.48, 0.6, 0.46, 0.4, 0.5],
  [0.72, 0.8, 0.9, 0.74, 0.4, 0.22, 0.26, 0.22, 0.25, 0.58, 0.36, 0.15, 0.2],
  [0.95, 0.9, 0.82, 0.66, 0.42, 0.22, 0.23, 0.25, 0.38, 0.7, 0.5, 0.3, 0.35],
  [0.55, 0.5, 0.5, 0.44, 0.22, 0.06, 0.15, 0.27, 0.5, 0.66, 0.56, 0.42, 0.45],
  [0.5, 0.5, 0.6, 0.38, 0.01, 0.12, 0.42, 0.5, 0.65, 0.72, 0.62, 0.5, 0.5],
  [0.25, 0.3, 0.38, 0.34, 0.22, 0.24, 0.46, 0.38, 0.28, 0.36, 0.42, 0.45, 0.45],
  [0.45, 0.48, 0.55, 0.7, 0.78, 0.7, 0.68, 0.56, 0.5, 0.55, 0.56, 0.55, 0.55],
];

function ringY(ring, x) {
  const t = Math.min(Math.abs(x - CX) / RX, 1);
  return ring[0] + (ring[1] - ring[0]) * Math.sqrt(1 - t * t);
}

const lerp = (a, b, t) => a + (b - a) * t;

function surfacePatches() {
  const patches = [];
  const rows = 12;
  for (let c = 0; c < 12; c++) {
    const x0 = columns[c];
    const x1 = columns[c + 1];
    const cols = Math.ceil((x1 - x0) / 3);
    patches.push({
      points: `${x0},${ringY(rings[0], x0)} ${x1},${ringY(rings[0], x1)} ${x1},${ringY(rings[5], x1)} ${x0},${ringY(rings[5], x0)}`,
      fill: mapColor(1, shades[c]),
    });
    for (let r = 5; r < 15; r++) {
      const a = field[r - 5];
      const b = field[r - 4];
      const corners = [ringY(rings[r], x0), ringY(rings[r], x1), ringY(rings[r + 1], x0), ringY(rings[r + 1], x1)];
      const y = (u, v) => lerp(lerp(corners[0], corners[1], u), lerp(corners[2], corners[3], u), v).toFixed(1);
      for (let i = 0; i < cols; i++) {
        for (let j = 0; j < rows; j++) {
          const u = i / cols;
          const v = j / rows;
          const u2 = (i + 1) / cols;
          const v2 = (j + 1) / rows;
          const um = (u + u2) / 2;
          const vm = (v + v2) / 2;
          const value = lerp(lerp(a[c], a[c + 1], um), lerp(b[c], b[c + 1], um), vm);
          const xa = lerp(x0, x1, u).toFixed(1);
          const xb = lerp(x0, x1, u2).toFixed(1);
          patches.push({
            points: `${xa},${y(u, v)} ${xb},${y(u2, v)} ${xb},${y(u2, v2)} ${xa},${y(u, v2)}`,
            fill: mapColor(value, shades[c]),
          });
        }
      }
    }
  }
  return patches;
}

const patches = surfacePatches();
const range = (n) => Array.from({ length: n }, (_, i) => i);

function CapMesh({ cy, ry }) {
  const rim = (x, sign) => {
    const t = (x - CX) / RX;
    return cy + sign * ry * Math.sqrt(Math.max(0, 1 - t * t));
  };
  return (
    <g fill="none" stroke="#00008c" strokeWidth="1">
      {[1, 0.87, 0.72, 0.57, 0.42].map(s => <ellipse key={s} cx={CX} cy={cy} rx={RX * s} ry={ry * s} />)}
      {columns.slice(1, 12).map(x => [1, -1].map(sign => {
        const inner = CX + (x - CX) * 0.42;
        return <path key={x + '.' + sign} d={`M${x} ${rim(x, sign)} L${inner} ${cy + (rim(x, sign) - cy) * 0.42}`} />;
      }))}
      {[-0.3, -0.15, 0, 0.15, 0.3].map(k => (
        <path key={k} d={`M${CX - 52 + Math.abs(k) * 50} ${cy + k * ry} H${CX + 52 - Math.abs(k) * 50}`} />
      ))}
      {[-35, -18, 0, 18, 35].map(dx => <path key={dx} d={`M${CX + dx} ${cy - ry * 0.4} V${cy + ry * 0.4}`} />)}
      <path d={`M${CX - RX} ${cy} H${CX + RX} M${CX} ${cy - ry} V${cy + ry}`} />
    </g>
  );
}

function Scene() {
  const zLabels = ['0.60', '0.50', '0.40', '0.30', '0.20', '0.10', '0.00'];
  const yLabels = ['0.10', '0.05', '0.00', '-0.05', '-0.10'];
  const legend = ['1.000e+00', '0.88213', '0.76427', '0.6464', '5.285e-01'];
  return (
    <svg viewBox="532 169 871 725" role="img" aria-label="Cylinder coloured by voidfraction">
      <defs>
        <linearGradient id="bar" x1="0" y1="1" x2="0" y2="0">
          {range(9).map(i => <stop key={i} offset={i / 8} stopColor={mapColor(i / 8)} />)}
        </linearGradient>
        <radialGradient id="base">
          <stop offset="0.84" stopColor="#6e0012" />
          <stop offset="0.92" stopColor="#8a3428" />
          <stop offset="1" stopColor="#a89a88" />
        </radialGradient>
      </defs>

      <g shapeRendering="crispEdges">
        {patches.map((p, i) => <polygon key={i} points={p.points} fill={p.fill} />)}
      </g>
      <g fill="none" stroke="#00008c" strokeOpacity=".9">
        {rings.map(ring => (
          <polyline key={ring[1]} points={columns.map(x => `${x},${ringY(ring, x)}`).join(' ')} />
        ))}
        {columns.map(x => <path key={x} d={`M${x} ${ringY(rings[0], x)} V${ringY(rings[15], x)}`} />)}
      </g>
      <ellipse cx={CX} cy="240" rx={RX} ry="27" fill="#26000a" />
      <CapMesh cy={240} ry={27} />
      <ellipse cx={CX} cy="822" rx={RX} ry="27" fill="url(#base)" />
      <CapMesh cy={822} ry={27} />

      <g stroke="#000" shapeRendering="crispEdges">
        <path d="M1106 211V851M830 849H1106" />
        {range(61).map(i => (
          <path key={i} d={`M${i % 10 ? 1102 : 1098} ${211 + Math.round(i * 10.67)}H1106`} />
        ))}
        {range(51).map(i => {
          const x = 835 + Math.round(i * 5.28);
          return <path key={i} d={`M${x} ${i % 10 === 5 ? 841 : 845}V849`} />;
        })}
      </g>
      <path d="M1089 815 1106 850" stroke="#000" strokeWidth="5" strokeDasharray="5 1" />

      <g fontFamily="Liberation Sans, Arial, sans-serif" fill="#111">
        <g fontSize="15" textAnchor="middle">
          {zLabels.map((t, i) => {
            const y = 213 + i * 106;
            return <text key={t} transform={`translate(1135 ${y}) rotate(-90)`}>{t}</text>;
          })}
          {yLabels.map((t, i) => <text key={t} x={861 + i * 53} y="878">{t}</text>)}
          <text transform="translate(1163 531) rotate(-90)" fontSize="16">Z-Axis</text>
          <text x="1278" y="558" fontSize="16">voidfraction</text>
        </g>
        <g fontSize="14">
          {legend.map((t, i) => <text key={t} x="1294" y={576 + i * 70}>{t}</text>)}
          <text x="625" y="762">Z</text>
          <text x="584" y="802">Y</text>
          <text x="625" y="803">X</text>
        </g>
      </g>

      <rect x="1271" y="573" width="15" height="280" fill="url(#bar)" />
      <g stroke="#444" shapeRendering="crispEdges">
        {range(41).map(i => <path key={i} d={`M${i % 10 ? 1286 : 1281} ${573 + i * 7}H1293`} />)}
      </g>

      <path d="M623 802V760" stroke="#4cf04c" strokeWidth="2" />
      <path d="M619 762 623 751 627 762Z" fill="#00b800" />
      <path d="M622 802H582" stroke="#ffff3c" strokeWidth="2" />
      <path d="M573 802 583 798V806Z" fill="#c8b400" />
      <circle cx="623" cy="802" r="3" fill="#f01414" />
    </svg>
  );
}

function TransferFunction() {
  const knobs = [[7, 148, '#8c98e0'], [299, 7, '#d8708a'], [7, 174, '#8ca0ea'], [153, 174, '#dcdcdc'], [299, 174, '#d8506a']];
  return (
    <svg viewBox="0 0 305 193" preserveAspectRatio="none" role="img" aria-label="Opacity and color transfer function">
      <defs>
        <linearGradient id="opacity">
          {range(9).map(i => <stop key={i} offset={i / 8} stopColor={mapColor(i / 8)} stopOpacity={i / 8} />)}
        </linearGradient>
        <linearGradient id="colors">
          {range(9).map(i => <stop key={i} offset={i / 8} stopColor={mapColor(i / 8)} />)}
        </linearGradient>
      </defs>
      <path d="M7 148H298V7Z" fill="url(#opacity)" />
      <path d="M7 148 299 7" stroke="#54545c" strokeWidth="2" />
      <rect x="7" y="163" width="292" height="22" fill="url(#colors)" />
      {knobs.map(([x, y, fill], i) => (
        <g key={i}>
          <circle cx={x} cy={y} r="5" fill={fill} stroke="#76766c" strokeWidth="2" />
          <circle cx={x} cy={y} r="4" fill="none" stroke="#d8d8cc" />
        </g>
      ))}
    </svg>
  );
}

// ---------- panels ----------

function TopBars() {
  const menus = ['File', 'Edit', 'View', 'Sources', 'Filters', 'Tools', 'Catalyst', 'Macros', 'Help'];
  return (
    <>
      <MenuBar>
        {menus.map(menu => <MenuItem key={menu}><Mnemonic text={menu} /></MenuItem>)}
      </MenuBar>
      <ToolBar>
        <Handle $right={1} />
        {tools(['open', 'save'])}
        <Separator />
        {tools(['connect', 'disconnect'])}
        <Separator />
        {tools(['undo', 'redo'])}
        <Separator />
        {tools(['help'])}
        <Separator />
        {tools(['boxOut', 'pickColor', 'palette'])}
        <Handle $left={8} $right={2} />
        {tools(['first', 'back', 'play', 'forward', 'last', 'loop'])}
        <Handle $left={9} />
        <TimeLabel>
          Time:
          <TextBox $width={101} defaultValue="0" />
        </TimeLabel>
        <Spinner>
          <TextBox $width={35} defaultValue="0" disabled aria-label="Time step" />
          <SpinnerArrows>
            <ArrowButton aria-label="Step up"><Triangle up color="#777" /></ArrowButton>
            <ArrowButton aria-label="Step down"><Triangle color="#777" /></ArrowButton>
          </SpinnerArrows>
        </Spinner>
      </ToolBar>
      <ToolBar>
        <Handle $right={1} />
        <ToolButton $active aria-label="Color legend"><Icon name="colorBar" size={22} /></ToolButton>
        {tools(['editMap', 'rescale', 'rescaleC', 'rescaleEye'], 32)}
        <Select label="Coloring" value="voidfraction" mark $width={194} $height={20} $pad={20} />
        <Select label="Component" value="" disabled $width={66} $height={20} $left={5} />
        <Handle $left={8} />
        <Select label="Representation" value="Surface With Edges" $width={139} $height={20} />
        <Handle $left={8} />
        {tools(['reset', 'resetD', 'zoomBox', 'plusX', 'minusX', 'plusY', 'minusY', 'plusZ', 'minusZ'], 31)}
        <Handle $left={9} $right={3} />
        <ToolButton $active aria-label="Show orientation axes"><Icon name="showAxes" size={22} /></ToolButton>
        {tools(['center', 'resetCenter', 'pickCenter'])}
        <Handle $left={9} />
        <MacroLink>vtk2csv_out</MacroLink>
      </ToolBar>
      <ToolBar $height={35}>
        <Handle />
        {tools(['calculator', 'contour', 'clip', 'slice', 'threshold', 'subset', 'glyph', 'stream', 'warp', 'group', 'extract'], 33)}
        <Handle $left={2} />
        {tools(['selection', 'plotTime', 'plotLine', 'plotSelection', 'probe'], 32)}
      </ToolBar>
    </>
  );
}

function PropertiesPanel() {
  return (
    <ScrollArea $margin="6px 8px 8px 5px">
      <ScrollBody>
        <Row $top={1}>
          <RowLabel $width={101} htmlFor="subdivision">{'Nonlinear\nSubdivision Level'}</RowLabel>
          <Slider type="range" min="0" max="4" defaultValue="1" $width={194} $right={6} aria-label="Subdivision slider" />
          <TextBox id="subdivision" defaultValue="1" />
        </Row>
        <Row $top={4}>
          <RowLabel $width={101} htmlFor="distinct">{'Block Colors\nDistinct Values'}</RowLabel>
          <TextBox id="distinct" defaultValue="12" />
        </Row>
        <Heading $top={4}>Cube Axes</Heading>
        <Row $top={5}>
          <RowLabel as="div" $width={250}><Check label="Show Axis" defaultChecked /></RowLabel>
          <PushButton>Edit</PushButton>
        </Row>
        <Rule $top={4} />
        <Row $top={10} $gap={3}>
          <RowLabel $width={98} htmlFor="opacityUnit">{'Scalar\nOpacity Unit'}</RowLabel>
          <TextBox id="opacityUnit" defaultValue="0.0560994209285069" />
          <PushButton $width={30}>X <Triangle size={6} /></PushButton>
          <PushButton $width={30} $height={24} aria-label="Refresh"><Icon name="refresh" size={15} /></PushButton>
        </Row>
        <Row $top={2}>
          <RowLabel as="div" $width={101}>Select Mapper</RowLabel>
          <Select label="Select Mapper" value="Projected tetra" />
        </Row>
        <Row $top={6} $gap={3}>
          <GroupButton $height={26}><Icon name="minus" size={14} />View (Render View)</GroupButton>
          {['copy', 'paste', 'refresh', 'disk'].map(name => (
            <PushButton key={name} $width={28} $height={24} aria-label={name}><Icon name={name} size={15} /></PushButton>
          ))}
        </Row>
        <Row $top={10} $gap={4}>
          <CheckBox type="checkbox" aria-label="Axes grid" />
          <PushButton>Edit Axes Grid ...</PushButton>
        </Row>
        <Row $top={6}><Check label="Center Axes Visibility" /></Row>
        <Heading $top={6}>Orientation Axes</Heading>
        <Row $top={7}><Check label="Orientation Axes Visibility" defaultChecked /></Row>
        <Row $top={8}><Check label="Orientation Axes Interactivity" /></Row>
        {['Label', 'Outline'].map(name => (
          <Row key={name} $top={4}>
            <ColorButton $height={23}><Swatch $color="#000" $edge="#000" />Orientation Axes {name} Color</ColorButton>
            <PushButton $width={11} $height={23} $pale aria-label={name + ' color menu'}><Triangle /></PushButton>
          </Row>
        ))}
        <Heading $top={5}>Lights</Heading>
      </ScrollBody>
      <VerticalScroll top={217} height={96} />
    </ScrollArea>
  );
}

function ColorMapPanel() {
  return (
    <ScrollArea $margin="0 6px 8px 6px">
      <ScrollBody>
        <Row $top={2}><Check label="Lock Data Range" /></Row>
        <Row $top={7}><Check label="Interpret Values As Categories" /></Row>
        <Row $top={7}><Check label="Rescale On Visibility Change" /></Row>
        <Heading $top={7}>Mapping Data</Heading>
        <MappingRow>
          <MappingChart><TransferFunction /></MappingChart>
          <MappingTools>
            {['rescale', 'rescaleC', 'rescaleT', 'rescaleEye', 'invert', 'favorite', 'save', 'gear'].map(name => (
              <PushButton key={name} $pale $height={24} aria-label={name}><Icon name={name} size={16} /></PushButton>
            ))}
          </MappingTools>
        </MappingRow>
        <Row $top={6}>
          <RowLabel $width={37} htmlFor="data">Data:</RowLabel>
          <TextBox id="data" disabled />
        </Row>
        <Row $top={7}><Check label="Use log scale when mapping data to colors" /></Row>
        <Row $top={9}><Check label="Enable opacity mapping for surfaces" /></Row>
        <Heading $top={7}>Color Mapping Parameters</Heading>
        <Row $top={5}>
          <RowLabel as="div" $width={98}>Color Space</RowLabel>
          <Select label="Color Space" value="Diverging" />
        </Row>
        <Rule $top={5} />
        <Row $top={10}><Check label="Use Below Range Color" /></Row>
        <Row $top={6}>
          <ColorButton $height={23} disabled><Swatch $color="#606060" $edge="#606060" />Below Range Color</ColorButton>
        </Row>
        <Row $top={6}><Check label="Use Above Range Color" /></Row>
        <Row $top={5}>
          <ColorButton $height={23} disabled><Swatch $color="#fff" $edge="#999" />Above Range Color</ColorButton>
        </Row>
        <Heading $top={5}>Color Mapping Parameters</Heading>
        <Row $top={5}>
          <ColorButton $height={23}><Swatch $color="#ff0" $edge="#77771a" />Nan Color</ColorButton>
        </Row>
        <Heading $top={5}>Color Discretization</Heading>
        <Row $top={7}><Check label="Discretize" defaultChecked /></Row>
        <Row $top={6}>
          <RowLabel $width={98} htmlFor="tableValues">{'Number Of Table\nValues'}</RowLabel>
          <Slider type="range" min="0" max="1024" defaultValue="256" $width={113} $right={7} aria-label="Table values slider" />
          <TextBox id="tableValues" defaultValue="256" />
        </Row>
        <Heading $top={4}>Annotations</Heading>
        <AnnotationRow>
          <AnnotationBox>
            <AnnotationTable>
              <thead>
                <tr><th>Value</th><th>Annotation</th></tr>
              </thead>
            </AnnotationTable>
          </AnnotationBox>
          <AnnotationTools>
            <PushButton $pale $height={23} aria-label="Add"><Icon name="plus" size={14} /></PushButton>
            <PushButton $pale $height={23} aria-label="Remove"><Icon name="minus" size={14} /></PushButton>
          </AnnotationTools>
        </AnnotationRow>
      </ScrollBody>
      <VerticalScroll top={0} height={543} />
    </ScrollArea>
  );
}

function App() {
  return (
    <Page>
      <GlobalStyle />
      <svg width="0" height="0" style={{ position: 'absolute' }} aria-hidden="true"><RainbowDef /></svg>
      <TopBars />
      <Workspace>
        <LeftDock>
          <DockTitle title="Pipeline Browser" right={1} />
          <Tree>
            <TreeItem><Icon name="server" size={14} />builtin:</TreeItem>
            <TreeItem $selected>
              <Icon name="eye" size={14} />
              <TreeLabel><Icon name="dataset" size={14} />u0.1000parnum10000coke0.0700_19.vtk</TreeLabel>
            </TreeItem>
          </Tree>
          <SplitterRow />
          <Tabs>
            <Tab $active $width={79}>Properties</Tab>
            <Tab $width={87}>Information</Tab>
          </Tabs>
          <DockTitle title="Properties" right={1} />
          <ActionRow>
            <PushButton $height={25} disabled><Icon name="apply" size={15} /><Mnemonic text="Apply" /></PushButton>
            <PushButton $height={25} disabled><Icon name="resetDisk" size={14} /><Mnemonic text="Reset" /></PushButton>
            <PushButton $height={25}><Icon name="remove" size={14} /><Mnemonic text="Delete" /></PushButton>
            <PushButton $height={25} aria-label="Help"><Icon name="help" size={14} /></PushButton>
          </ActionRow>
          <SearchRow $pad="7px 8px 0 5px">
            <TextBox placeholder="Search ... (use Esc to clear text)" aria-label="Search properties" />
            <PushButton $active $width={24} $height={23} aria-label="Advanced"><Icon name="gear" size={16} /></PushButton>
          </SearchRow>
          <PropertiesPanel />
        </LeftDock>
        <Splitter $width={7} />
        <Center>
          <Tabs>
            <Tab $active $width={106}>
              <Icon name="window" size={11} />Layout #1 <Icon name="close" size={9} />
            </Tab>
            <Tab $width={31}>+</Tab>
          </Tabs>
          <ViewFrame>
            <ViewBar>
              {['camUndo', 'camRedo', '3D', 'camera', 'selCells', 'selPoints', 'frustumCells', 'frustumPoints', 'polyCells', 'polyPoints', 'selBlock', 'pickCells', 'pickPoints', 'trash'].map(name => (
                <ViewTool key={name} aria-label={name}>{name === '3D' ? '3D' : <Icon name={name} size={12} />}</ViewTool>
              ))}
              <ViewName>RenderView1</ViewName>
              {['splitH', 'splitV', 'window', 'float', 'close'].map(name => (
                <ViewButton key={name} aria-label={name}><Icon name={name} size={name === 'close' ? 8 : 11} /></ViewButton>
              ))}
            </ViewBar>
            <Canvas><Scene /></Canvas>
          </ViewFrame>
        </Center>
        <Splitter $width={9} />
        <RightDock>
          <DockTitle title="Color Map Editor" />
          <SearchRow $pad="8px 6px 0 6px">
            <TextBox placeholder="Search ... (use Esc to clear text)" aria-label="Search color map" />
            <PushButton $active $width={24} $height={23} aria-label="Advanced"><Icon name="gear" size={16} /></PushButton>
            <PushButton $active $width={24} $height={23} aria-label="Color legend"><Icon name="bars" size={16} /></PushButton>
            <PushButton $pale $width={24} $height={23} aria-label="Edit legend"><Icon name="barsE" size={16} /></PushButton>
          </SearchRow>
          <ArrayName>Array Name: voidfraction</ArrayName>
          <ColorMapPanel />
        </RightDock>
      </Workspace>
      <StatusBar>
        <Progress>
          <StopButton aria-label="Abort"><Icon name="stop" size={9} /></StopButton>
        </Progress>
      </StatusBar>
      <Watermark>CSDN @zhl-handsome</Watermark>
      <SizeGrip width="9" height="9" viewBox="0 0 9 9" aria-hidden="true">
        <path d="M0 9 9 0M3 9 9 3M6 9 9 6" stroke="#555" />
      </SizeGrip>
    </Page>
  );
}

export default App;
